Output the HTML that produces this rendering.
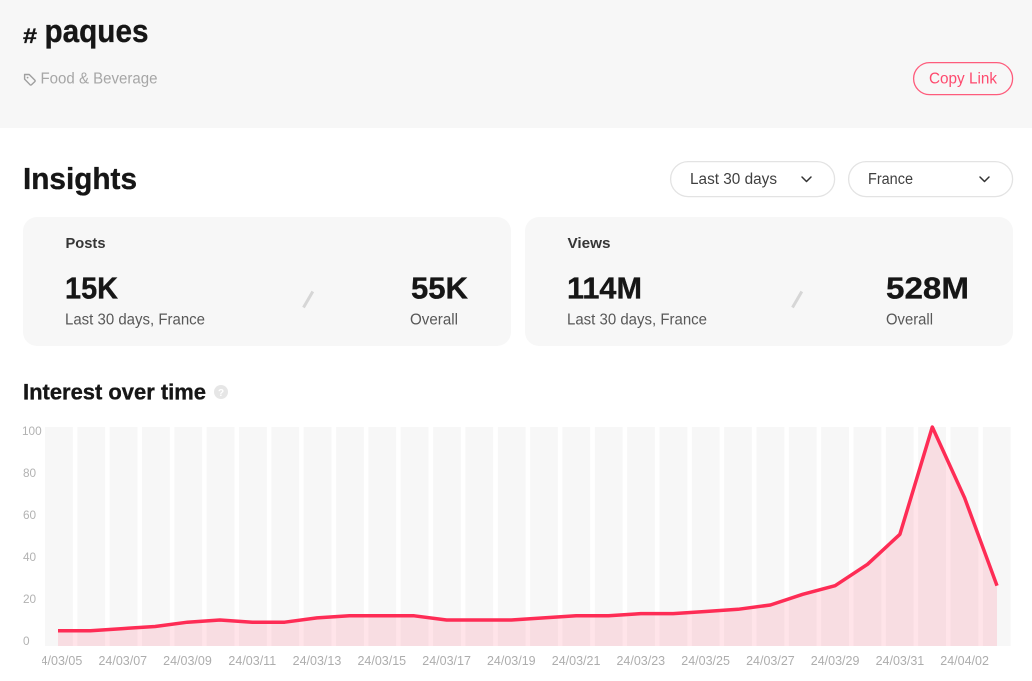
<!DOCTYPE html>
<html><head><meta charset="utf-8"><title>#paques</title>
<style>
html,body{margin:0;padding:0;background:#fff;width:1032px;height:681px;overflow:hidden}
svg{display:block;filter:blur(.35px)}
text{font-family:"Liberation Sans",sans-serif}
.b{font-weight:700}
.h{stroke:#161616;stroke-width:.35px}
.y{font-size:11.8px;fill:#b2b2b2}
.x{font-size:12.5px;fill:#adadad;text-anchor:middle}
</style></head><body>
<svg width="1032" height="681" viewBox="0 0 1032 681" xmlns="http://www.w3.org/2000/svg">
<defs><clipPath id="c"><rect x="42" y="650" width="990" height="31"/></clipPath></defs>
<rect width="1032" height="128" fill="#f7f7f7"/>
<text x="23" y="43" class="b h" font-size="21" fill="#161616" textLength="14" lengthAdjust="spacingAndGlyphs">#</text>
<text x="44.500" y="42" class="b h" font-size="32" fill="#161616" textLength="104" lengthAdjust="spacingAndGlyphs">paques</text>
<path d="M24.600 74.500h4.600l5.600 5.600a1.100 1.100 0 0 1 0 1.500l-3.300 3.100a1.100 1.100 0 0 1-1.500 0l-5.400-5.600z" fill="none" stroke="#9f9f9f" stroke-width="1.400" stroke-linejoin="round"/>
<circle cx="27.600" cy="77.600" r=".9" fill="#9f9f9f"/>
<text x="40.500" y="83.500" font-size="15.500" fill="#a6a6a6" textLength="117" lengthAdjust="spacingAndGlyphs">Food &amp; Beverage</text>
<rect x="913.600" y="62.600" width="99" height="32" rx="16" fill="none" stroke="#fe5c7c" stroke-width="1.300"/>
<text x="929" y="83.500" font-size="15.500" fill="#fe4a6e" textLength="68" lengthAdjust="spacingAndGlyphs">Copy Link</text>

<text x="23" y="189" class="b h" font-size="31" fill="#161616" textLength="114" lengthAdjust="spacingAndGlyphs">Insights</text>
<rect x="670.600" y="161.600" width="164" height="35" rx="17.500" fill="#fff" stroke="#e3e3e3" stroke-width="1.300"/>
<text x="690" y="184" font-size="15.500" fill="#3f3f3f" textLength="87" lengthAdjust="spacingAndGlyphs">Last 30 days</text>
<path d="M802 177l4.500 4.500 4.500-4.500" fill="none" stroke="#333" stroke-width="1.500" stroke-linecap="round" stroke-linejoin="round"/>
<rect x="848.600" y="161.600" width="164" height="35" rx="17.500" fill="#fff" stroke="#e3e3e3" stroke-width="1.300"/>
<text x="868" y="184" font-size="15.500" fill="#3f3f3f" textLength="45" lengthAdjust="spacingAndGlyphs">France</text>
<path d="M980 177l4.500 4.500 4.500-4.500" fill="none" stroke="#333" stroke-width="1.500" stroke-linecap="round" stroke-linejoin="round"/>

<rect x="23" y="217" width="488" height="129" rx="14" fill="#f7f7f7"/>
<rect x="525" y="217" width="488" height="129" rx="14" fill="#f7f7f7"/>
<text x="65.500" y="248" class="b" font-size="15" fill="#363636" textLength="40" lengthAdjust="spacingAndGlyphs">Posts</text>
<text x="65" y="298.500" class="b h" font-size="31" fill="#161616" textLength="53" lengthAdjust="spacingAndGlyphs">15K</text>
<text x="65" y="324.500" font-size="15.500" fill="#585858" textLength="140" lengthAdjust="spacingAndGlyphs">Last 30 days, France</text>
<text x="411" y="298.500" class="b h" font-size="31" fill="#161616" textLength="57" lengthAdjust="spacingAndGlyphs">55K</text>
<text x="410" y="324.500" font-size="15.500" fill="#585858" textLength="48" lengthAdjust="spacingAndGlyphs">Overall</text>
<path d="M303.500 307.500L312.800 291.500" stroke="#d6d6d6" stroke-width="3"/>
<text x="567.500" y="248" class="b" font-size="15" fill="#363636" textLength="43" lengthAdjust="spacingAndGlyphs">Views</text>
<text x="567" y="298.500" class="b h" font-size="31" fill="#161616" textLength="75" lengthAdjust="spacingAndGlyphs">114M</text>
<text x="567" y="324.500" font-size="15.500" fill="#585858" textLength="140" lengthAdjust="spacingAndGlyphs">Last 30 days, France</text>
<text x="886" y="298.500" class="b h" font-size="31" fill="#161616" textLength="83" lengthAdjust="spacingAndGlyphs">528M</text>
<text x="886" y="324.500" font-size="15.500" fill="#585858" textLength="47" lengthAdjust="spacingAndGlyphs">Overall</text>
<path d="M792.500 307.500L801.800 291.500" stroke="#d6d6d6" stroke-width="3"/>

<text x="23" y="399.500" class="b h" font-size="22" fill="#161616" textLength="183" lengthAdjust="spacingAndGlyphs">Interest over time</text>
<circle cx="221" cy="392" r="7" fill="#e6e6e6"/>
<text x="221" y="396" class="b" font-size="10" fill="#fff" text-anchor="middle">?</text>

<g fill="#f7f7f7">
<rect x="45" y="427" width="27.800" height="219"/><rect x="77.300" y="427" width="27.800" height="219"/><rect x="109.700" y="427" width="27.800" height="219"/><rect x="142" y="427" width="27.800" height="219"/><rect x="174.400" y="427" width="27.800" height="219"/><rect x="206.700" y="427" width="27.800" height="219"/><rect x="239" y="427" width="27.800" height="219"/><rect x="271.400" y="427" width="27.800" height="219"/><rect x="303.700" y="427" width="27.800" height="219"/><rect x="336.100" y="427" width="27.800" height="219"/><rect x="368.400" y="427" width="27.800" height="219"/><rect x="400.700" y="427" width="27.800" height="219"/><rect x="433.100" y="427" width="27.800" height="219"/><rect x="465.400" y="427" width="27.800" height="219"/><rect x="497.800" y="427" width="27.800" height="219"/><rect x="530.100" y="427" width="27.800" height="219"/><rect x="562.400" y="427" width="27.800" height="219"/><rect x="594.800" y="427" width="27.800" height="219"/><rect x="627.100" y="427" width="27.800" height="219"/><rect x="659.500" y="427" width="27.800" height="219"/><rect x="691.800" y="427" width="27.800" height="219"/><rect x="724.100" y="427" width="27.800" height="219"/><rect x="756.500" y="427" width="27.800" height="219"/><rect x="788.800" y="427" width="27.800" height="219"/><rect x="821.200" y="427" width="27.800" height="219"/><rect x="853.500" y="427" width="27.800" height="219"/><rect x="885.800" y="427" width="27.800" height="219"/><rect x="918.200" y="427" width="27.800" height="219"/><rect x="950.500" y="427" width="27.800" height="219"/><rect x="982.900" y="427" width="27.800" height="219"/>
</g>
<path fill="#fe2c55" fill-opacity=".13" d="M58 646V630.800L90.400 630.800 122.800 628.600 155.100 626.500 187.500 622.200 219.900 620 252.300 622.200 284.700 622.200 317 617.900 349.400 615.800 381.800 615.800 414.200 615.800 446.600 620 478.900 620 511.300 620 543.700 617.900 576.100 615.800 608.500 615.800 640.800 613.600 673.200 613.600 705.600 611.500 738 609.300 770.400 605 802.700 594.300 835.100 585.700 867.500 564.300 899.900 534.300 932.300 427 964.600 497.800 997 585.700V646Z"/>
<path fill="none" stroke="#fe2c55" stroke-width="3.500" stroke-linejoin="round" d="M58 630.800L90.400 630.800 122.800 628.600 155.100 626.500 187.500 622.200 219.900 620 252.300 622.200 284.700 622.200 317 617.900 349.400 615.800 381.800 615.800 414.200 615.800 446.600 620 478.900 620 511.300 620 543.700 617.900 576.100 615.800 608.500 615.800 640.800 613.600 673.200 613.600 705.600 611.500 738 609.300 770.400 605 802.700 594.300 835.100 585.700 867.500 564.300 899.900 534.300 932.300 427 964.600 497.800 997 585.700"/>

<text x="22" y="435" class="y">100</text><text x="23" y="477" class="y">80</text><text x="23" y="519" class="y">60</text><text x="23" y="561" class="y">40</text><text x="23" y="603" class="y">20</text><text x="23" y="645" class="y">0</text>
<g clip-path="url(#c)">
<text x="58" y="665" class="x">24/03/05</text>
<text x="122.800" y="665" class="x">24/03/07</text>
<text x="187.500" y="665" class="x">24/03/09</text>
<text x="252.300" y="665" class="x">24/03/11</text>
<text x="317" y="665" class="x">24/03/13</text>
<text x="381.800" y="665" class="x">24/03/15</text>
<text x="446.600" y="665" class="x">24/03/17</text>
<text x="511.300" y="665" class="x">24/03/19</text>
<text x="576.100" y="665" class="x">24/03/21</text>
<text x="640.800" y="665" class="x">24/03/23</text>
<text x="705.600" y="665" class="x">24/03/25</text>
<text x="770.400" y="665" class="x">24/03/27</text>
<text x="835.100" y="665" class="x">24/03/29</text>
<text x="899.900" y="665" class="x">24/03/31</text>
<text x="964.600" y="665" class="x">24/04/02</text>
</g>
</svg>
</body></html>
